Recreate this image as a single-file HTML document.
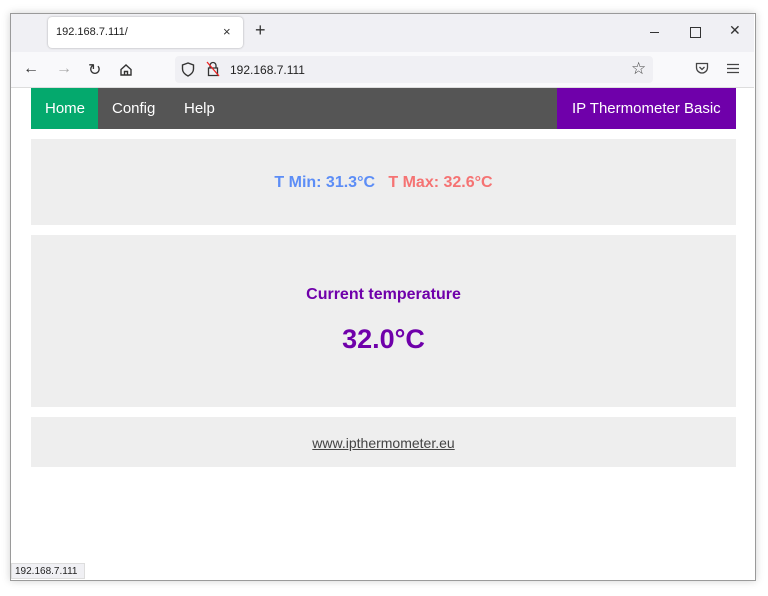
<!DOCTYPE html><html><head><style>
body{margin:0;width:768px;height:596px;background:#fff;position:relative;overflow:hidden;font-family:"Liberation Sans",sans-serif}
.a{position:absolute}
.win{left:10px;top:13px;width:744px;height:566px;border:1px solid #9a9a9a;box-shadow:0 0 8px rgba(0,0,0,.18);background:#fff}
.t{font-size:11px;color:#222}
.nav{left:31px;top:88px;width:705px;height:41px;background:#555;color:#fff;font-size:15px}
.nav span{position:absolute;top:12px}
.box{left:31px;width:705px;background:#eee;text-align:center;font-weight:bold}
</style></head><body>
<div class="a win"></div>
<div class="a" style="left:11px;top:14px;width:743px;height:38px;background:#f0f0f4"></div>
<div class="a" style="left:48px;top:17px;width:195px;height:31px;background:#fff;border-radius:4px;box-shadow:0 0 2px rgba(0,0,0,.3)"></div>
<div class="a t" style="left:56px;top:26px">192.168.7.111/</div>
<div class="a" style="left:223px;top:24px;font-size:13px;color:#333">×</div>
<div class="a" style="left:255px;top:20px;font-size:18px;color:#333">+</div>
<div class="a" style="left:650px;top:32px;width:9px;height:1px;background:#333"></div>
<div class="a" style="left:690px;top:27px;width:9px;height:9px;border:1px solid #333"></div>
<div class="a" style="left:729px;top:22px;font-size:14px;color:#333">✕</div>
<div class="a" style="left:11px;top:52px;width:743px;height:35px;background:#f9f9fb;border-bottom:1px solid #ddd"></div>
<div class="a" style="left:175px;top:56px;width:478px;height:27px;background:#f0f0f4;border-radius:4px"></div>
<div class="a" style="left:23px;top:60px;font-size:16px;color:#333">←</div>
<div class="a" style="left:56px;top:60px;font-size:16px;color:#aaa">→</div>
<div class="a" style="left:88px;top:60px;font-size:16px;color:#333">↻</div>
<svg class="a" style="left:119px;top:63px" width="14" height="14" viewBox="0 0 14 14" fill="none" stroke="#333" stroke-width="1.4"><path d="M2 6.5L7 2l5 4.5V12H2z M5.5 12V8.5h3V12"/></svg>
<svg class="a" style="left:181px;top:62px" width="14" height="15" viewBox="0 0 14 15" fill="none" stroke="#333" stroke-width="1.4"><path d="M7 1L1.5 3v4c0 3.5 2.5 5.5 5.5 7 3-1.5 5.5-3.5 5.5-7V3z"/></svg>
<svg class="a" style="left:206px;top:61px" width="14" height="16" viewBox="0 0 14 16" fill="none" stroke="#333" stroke-width="1.3"><path d="M4 7V4.5a3 3 0 016 0V7 M2.5 7h9v7.5h-9z"/><path d="M1 1l12 14" stroke="#e22"/></svg>
<div class="a" style="left:230px;top:63px;font-size:12px;color:#222">192.168.7.111</div>
<div class="a" style="left:631px;top:59px;font-size:17px;color:#444">☆</div>
<svg class="a" style="left:695px;top:62px" width="14" height="13" viewBox="0 0 14 13" fill="none" stroke="#444" stroke-width="1.3"><path d="M1.5 1.5h11v4a5.5 5.5 0 01-11 0z M4.5 5l2.5 2.5L9.5 5"/></svg>
<svg class="a" style="left:727px;top:63px" width="12" height="11" stroke="#444" stroke-width="1.3"><path d="M0 1.5h12M0 5.5h12M0 9.5h12"/></svg>
<div class="a nav"><div class="a" style="left:0;top:0;width:67px;height:41px;background:#04a96d"></div>
<span style="left:14px">Home</span><span style="left:81px">Config</span><span style="left:153px">Help</span>
<div class="a" style="left:526px;top:0;width:179px;height:41px;background:#6f00aa"></div><span style="left:541px">IP Thermometer Basic</span></div>
<div class="a box" style="top:139px;height:86px;font-size:16px"><div style="margin-top:35px"><span style="color:#5c8df6">T Min: 31.3°C</span> &nbsp;&nbsp;<span style="color:#f57373">T Max: 32.6°C</span></div></div>
<div class="a box" style="top:235px;height:172px;color:#6f00aa"><div style="margin-top:51px;font-size:16px">Current temperature</div><div style="margin-top:20px;font-size:27px">32.0°C</div></div>
<div class="a box" style="top:417px;height:50px;font-weight:normal"><div style="margin-top:18px;font-size:14px;color:#444;text-decoration:underline">www.ipthermometer.eu</div></div>
<div class="a" style="left:11px;top:563px;width:74px;height:16px;background:#f0f0f4;border:1px solid #ddd;font-size:10px;color:#222;line-height:16px;padding-left:3px;box-sizing:border-box">192.168.7.111</div>
</body></html>
